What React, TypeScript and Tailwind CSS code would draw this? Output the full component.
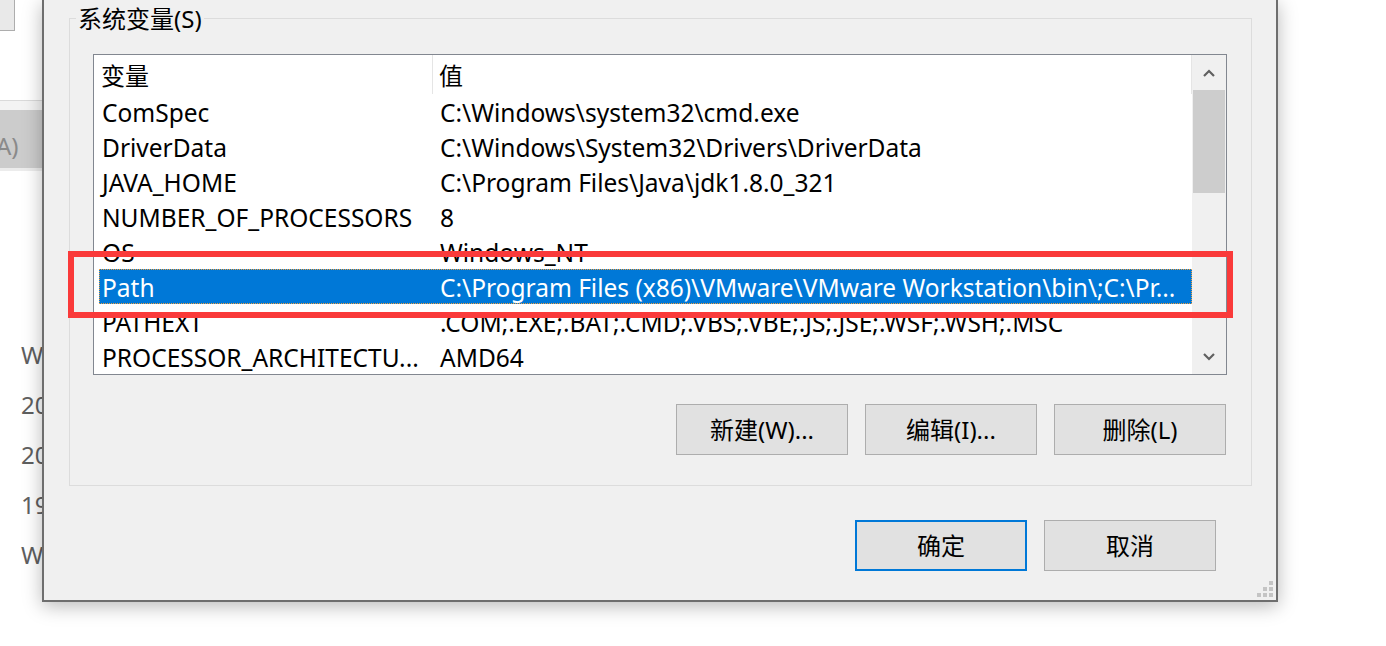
import React from 'react';

const font = { fontFamily: '"Noto Sans", "Noto Sans CJK SC", sans-serif' };

const rows: [string, string][] = [
  ['ComSpec', 'C:\\Windows\\system32\\cmd.exe'],
  ['DriverData', 'C:\\Windows\\System32\\Drivers\\DriverData'],
  ['JAVA_HOME', 'C:\\Program Files\\Java\\jdk1.8.0_321'],
  ['NUMBER_OF_PROCESSORS', '8'],
  ['OS', 'Windows_NT'],
  ['Path', 'C:\\Program Files (x86)\\VMware\\VMware Workstation\\bin\\;C:\\Pr...'],
  ['PATHEXT', '.COM;.EXE;.BAT;.CMD;.VBS;.VBE;.JS;.JSE;.WSF;.WSH;.MSC'],
  ['PROCESSOR_ARCHITECTU...', 'AMD64'],
];

// Window behind the dialog, only a sliver shows on the left
const BackWindow: React.FC = () => (
  <div className="w-[42px] h-[646px] shrink-0 overflow-hidden flex flex-col">
    <div className="h-[31px] w-[15px] bg-[#e9e9e9] border-r border-b border-[#adadad]" />
    <div className="h-[69px]" />
    <div className="h-[10px] border-t border-[#dadada] bg-[#f3f3f3]" />
    <div className="h-[58px] bg-[#cccccc] flex items-center pt-[14px] text-[24px] text-[#8a8a8a] whitespace-nowrap">
      <span className="-ml-[4px]">A)</span>
    </div>
    <div className="h-[3px] bg-[#ececec]" />
    <div className="flex flex-col pl-[21px] pt-[159px] text-[24px] leading-[50px] text-[#5f5f5f] whitespace-nowrap">
      <span>WW</span>
      <span>2022</span>
      <span>2021</span>
      <span>1999</span>
      <span>WW</span>
    </div>
  </div>
);

const Chevron: React.FC<{ down?: boolean }> = ({ down }) => (
  <svg width="12" height="8" viewBox="0 0 12 8" className={down ? 'rotate-180' : ''}>
    <path d="M1 7 L6 2 L11 7" fill="none" stroke="#606060" strokeWidth="2.2" />
  </svg>
);

const WinButton: React.FC<{ label: string; primary?: boolean }> = ({ label, primary }) => (
  <button
    className={
      'w-[172px] h-[51px] bg-[#e1e1e1] text-[24px] text-black flex items-center justify-center ' +
      (primary ? 'border-2 border-[#0078d7]' : 'border border-[#adadad]')
    }
  >
    {label}
  </button>
);

const Grip: React.FC = () => (
  <svg width="18" height="18" viewBox="0 0 18 18">
    {[
      [12, 0],
      [6, 6],
      [12, 6],
      [0, 12],
      [6, 12],
      [12, 12],
    ].map(([x, y]) => (
      <rect key={`${x}-${y}`} x={x + 1} y={y + 1} width="4" height="4" fill="#c4c4c4" />
    ))}
  </svg>
);

const App: React.FC = () => {
  return (
    <div className="w-[1386px] h-[646px] bg-white overflow-hidden flex items-start" style={font}>
      <BackWindow />

      <div className="relative w-[1236px] h-[602px] shrink-0 bg-[#f0f0f0] border-l-2 border-r-2 border-b-2 border-[#6e6e6e] shadow-[0_4px_18px_rgba(0,0,0,0.28)] flex flex-col">
        <fieldset className="ml-[25px] mt-[3px] w-[1183px] border border-[#dcdcdc]">
          <legend className="ml-[6px] px-[2px] pt-[2px] text-[24px] leading-[28px] text-black">系统变量(S)</legend>

          <div className="pl-[23px] pr-[24px] pb-[30px]">
            {/* list view */}
            <div className="mt-[21px] w-[1134px] h-[321px] bg-white border border-[#828790] flex">
              <div className="flex-1 flex flex-col min-w-0">
                <div className="h-[41px] flex items-stretch text-[24px] text-black">
                  <div className="w-[339px] pl-[7px] pt-[2px] flex items-center border-r border-[#e5e5e5]">变量</div>
                  <div className="flex-1 pl-[6px] pt-[2px] flex items-center border-r border-[#e5e5e5]">值</div>
                </div>
                <div className="pl-[5px] flex flex-col">
                  {rows.map(([name, value]) => {
                    const sel = name === 'Path';
                    return (
                      <div
                        key={name}
                        className={
                          'h-[35px] flex items-center text-[24.5px] whitespace-nowrap ' +
                          (sel
                            ? 'bg-[#0078d7] text-white outline-1 outline-dotted outline-[#f0a040] -outline-offset-1'
                            : 'text-black')
                        }
                      >
                        <div className="w-[338px] pl-[3px] pt-[4px] overflow-hidden">{name}</div>
                        <div className="flex-1 pl-[3px] pt-[4px] overflow-hidden">{value}</div>
                      </div>
                    );
                  })}
                </div>
              </div>
              {/* scrollbar */}
              <div className="w-[34px] bg-[#f0f0f0] flex flex-col items-center">
                <div className="h-[35px] w-full flex items-center justify-center">
                  <Chevron />
                </div>
                <div className="w-[32px] h-[103px] bg-[#cdcdcd]" />
                <div className="flex-1" />
                <div className="h-[35px] w-full flex items-center justify-center">
                  <Chevron down />
                </div>
              </div>
            </div>

            <div className="mt-[29px] flex justify-end gap-[17px] pr-[1px]">
              <WinButton label="新建(W)..." />
              <WinButton label="编辑(I)..." />
              <WinButton label="删除(L)" />
            </div>
          </div>
        </fieldset>

        <div className="mt-[34px] flex justify-end gap-[17px] pr-[60px]">
          <WinButton label="确定" primary />
          <WinButton label="取消" />
        </div>

        <div className="mt-auto flex justify-end pr-[2px] pb-[2px]">
          <Grip />
        </div>
      </div>

      {/* red annotation around the selected row */}
      <div className="absolute left-[68px] top-[251px] w-[1165px] h-[67px] border-[6px] border-[#fa3a3a] pointer-events-none" />
    </div>
  );
};

export default App;
